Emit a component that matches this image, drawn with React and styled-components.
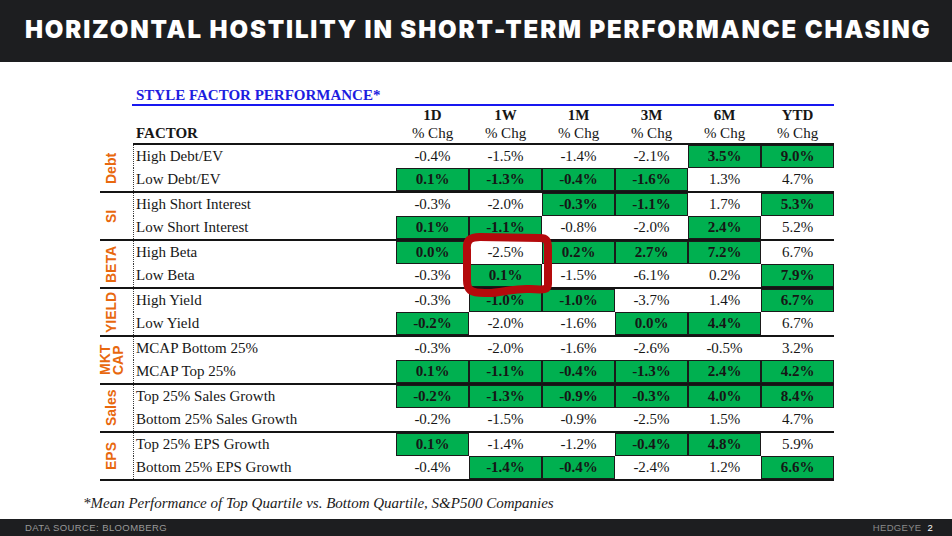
import React from 'react';
import styled, { createGlobalStyle } from 'styled-components';

const GlobalStyle = createGlobalStyle`
    html, body {
        margin: 0;
        padding: 0;
        background: #ffffff;
    }
`;

const Slide = styled.div`
    width: 952px;
    height: 536px;
    display: flex;
    flex-direction: column;
    background: #ffffff;
    overflow: hidden;
`;

const TopBar = styled.header`
    height: 62px;
    flex-shrink: 0;
    box-sizing: border-box;
    background: #1d1e20;
    display: flex;
    align-items: center;
    padding: 0 0 4px 25px;
`;

const Headline = styled.h1`
    margin: 0;
    color: #ffffff;
    font-family: Inter, "Liberation Sans", sans-serif;
    font-weight: 900;
    font-size: 24px;
    letter-spacing: 1.85px;
    white-space: nowrap;
`;

const Body = styled.main`
    flex: 1;
    padding: 24px 0 0 83px;
`;

const Sheet = styled.div`
    position: relative;
    width: 734px;
    margin-left: 17px;
    font-family: "Liberation Serif", "Times New Roman", serif;
    color: #161616;
`;

const SheetTitle = styled.div`
    margin-left: 32px;
    padding-left: 4px;
    height: 18px;
    line-height: 18px;
    font-size: 15px;
    font-weight: bold;
    color: #1d1de0;
    border-bottom: 2px solid #1818f0;
`;

const cols = '33px 263px repeat(6, 73px)';

const HeadRow = styled.div`
    display: grid;
    grid-template-columns: ${cols};
    grid-template-rows: 37px 2px;

    &::after {
        content: '';
        grid-column: 2 / -1;
        background: #141414;
    }
`;

const FactorHead = styled.div`
    grid-column: 2;
    align-self: end;
    padding: 0 0 1px 3px;
    font-size: 15px;
    font-weight: bold;
    line-height: 18px;
`;

const ColHead = styled.div`
    text-align: center;
    font-size: 15px;
    line-height: 18px;

    b {
        display: block;
    }
`;

const Group = styled.div`
    display: grid;
    grid-template-columns: ${cols};
    grid-template-rows: 23px 23px;
    border-top: ${p => (p.$first ? 'none' : '2px solid #141414')};
    border-bottom: ${p => (p.$last ? '2px solid #141414' : 'none')};
`;

/* rotated so it reads bottom to top; padding sides are mirrored by the rotation */
const Category = styled.div`
    grid-row: 1 / span 2;
    grid-column: 1;
    display: flex;
    flex-direction: column;
    align-items: center;
    justify-content: center;
    padding-left: 10px;
    writing-mode: vertical-rl;
    transform: rotate(180deg);
    font-family: "Liberation Sans", Arial, sans-serif;
    font-weight: bold;
    font-size: 14px;
    line-height: 13px;
    color: #e8680e;
`;

const Label = styled.div`
    grid-column: 2;
    border-left: 1px dotted #3a3a3a;
    padding-left: 2px;
    font-size: 15px;
    line-height: 23px;
    white-space: nowrap;
`;

const Value = styled.div`
    display: flex;
    align-items: center;
    justify-content: center;
    font-size: 15px;
    font-weight: ${p => (p.$good ? 'bold' : 'normal')};
    background: ${p => (p.$good ? '#00b050' : 'transparent')};
    border: 1px solid ${p => (p.$good ? '#1a1a1a' : 'transparent')};
`;

const Marker = styled.svg`
    position: absolute;
    left: 355px;
    top: 140px;
    width: 110px;
    height: 90px;
    pointer-events: none;
`;

const Footnote = styled.p`
    margin: 13px 0 0;
    font-family: "Liberation Serif", "Times New Roman", serif;
    font-style: italic;
    font-size: 15px;
    line-height: 18px;
    color: #1a1a1a;
`;

const BottomBar = styled.footer`
    height: 17px;
    flex-shrink: 0;
    background: #1d1e20;
    display: flex;
    align-items: center;
    justify-content: space-between;
    padding: 0 19px 0 25px;
    font-family: "Liberation Sans", Arial, sans-serif;
    font-size: 9.5px;
    letter-spacing: 0.4px;
    color: #9a9a9a;
`;

const Brand = styled.span`
    color: #8a8a8a;
    letter-spacing: 0.3px;

    b {
        color: #ffffff;
        font-weight: normal;
        margin-left: 6px;
    }
`;

const periods = ['1D', '1W', '1M', '3M', '6M', 'YTD'];

// [label, values], a leading '*' marks a green (outperforming) cell
const groups = [
    { name: ['Debt'], rows: [
        ['High Debt/EV', ['-0.4%', '-1.5%', '-1.4%', '-2.1%', '*3.5%', '*9.0%']],
        ['Low Debt/EV', ['*0.1%', '*-1.3%', '*-0.4%', '*-1.6%', '1.3%', '4.7%']],
    ] },
    { name: ['SI'], rows: [
        ['High Short Interest', ['-0.3%', '-2.0%', '*-0.3%', '*-1.1%', '1.7%', '*5.3%']],
        ['Low Short Interest', ['*0.1%', '*-1.1%', '-0.8%', '-2.0%', '*2.4%', '5.2%']],
    ] },
    { name: ['BETA'], rows: [
        ['High Beta', ['*0.0%', '-2.5%', '*0.2%', '*2.7%', '*7.2%', '6.7%']],
        ['Low Beta', ['-0.3%', '*0.1%', '-1.5%', '-6.1%', '0.2%', '*7.9%']],
    ] },
    { name: ['YIELD'], rows: [
        ['High Yield', ['-0.3%', '*-1.0%', '*-1.0%', '-3.7%', '1.4%', '*6.7%']],
        ['Low Yield', ['*-0.2%', '-2.0%', '-1.6%', '*0.0%', '*4.4%', '6.7%']],
    ] },
    { name: ['MKT', 'CAP'], rows: [
        ['MCAP Bottom 25%', ['-0.3%', '-2.0%', '-1.6%', '-2.6%', '-0.5%', '3.2%']],
        ['MCAP Top 25%', ['*0.1%', '*-1.1%', '*-0.4%', '*-1.3%', '*2.4%', '*4.2%']],
    ] },
    { name: ['Sales'], rows: [
        ['Top 25% Sales Growth', ['*-0.2%', '*-1.3%', '*-0.9%', '*-0.3%', '*4.0%', '*8.4%']],
        ['Bottom 25% Sales Growth', ['-0.2%', '-1.5%', '-0.9%', '-2.5%', '1.5%', '4.7%']],
    ] },
    { name: ['EPS'], rows: [
        ['Top 25% EPS Growth', ['*0.1%', '-1.4%', '-1.2%', '*-0.4%', '*4.8%', '5.9%']],
        ['Bottom 25% EPS Growth', ['-0.4%', '*-1.4%', '*-0.4%', '-2.4%', '1.2%', '*6.6%']],
    ] },
];

function App() {
    return (
        <Slide>
            <GlobalStyle />
            <TopBar>
                <Headline>HORIZONTAL HOSTILITY IN SHORT-TERM PERFORMANCE CHASING</Headline>
            </TopBar>

            <Body>
                <Sheet>
                    <SheetTitle>STYLE FACTOR PERFORMANCE*</SheetTitle>
                    <HeadRow>
                        <FactorHead>FACTOR</FactorHead>
                        {periods.map(p => (
                            <ColHead key={p}>
                                <b>{p}</b>
                                % Chg
                            </ColHead>
                        ))}
                    </HeadRow>

                    {groups.map((g, gi) => (
                        <Group key={gi} $first={gi === 0} $last={gi === groups.length - 1}>
                            <Category>
                                {g.name.map(n => <span key={n}>{n}</span>)}
                            </Category>
                            {g.rows.map(([label, values]) => (
                                <React.Fragment key={label}>
                                    <Label>{label}</Label>
                                    {values.map((v, vi) => (
                                        <Value key={vi} $good={v.startsWith('*')}>
                                            {v.replace('*', '')}
                                        </Value>
                                    ))}
                                </React.Fragment>
                            ))}
                        </Group>
                    ))}

                    {/* hand-drawn highlight around the Beta 1W cells */}
                    <Marker viewBox="0 0 110 90">
                        <path
                            d="M12 24 C11 14, 15 11, 25 11 L85 12 C91 12, 93 14, 93 22 L93 58 C93 64, 89 64, 75 63 C55 62, 45 68, 30 67 C15 67, 12 64, 12 54 Z"
                            fill="none"
                            stroke="#b40a0c"
                            strokeWidth="8"
                            strokeLinejoin="round"
                        />
                    </Marker>
                </Sheet>

                <Footnote>*Mean Performance of Top Quartile vs. Bottom Quartile, S&amp;P500 Companies</Footnote>
            </Body>

            <BottomBar>
                <span>DATA SOURCE: BLOOMBERG</span>
                <Brand>HEDGEYE<b>2</b></Brand>
            </BottomBar>
        </Slide>
    );
}

export default App;
